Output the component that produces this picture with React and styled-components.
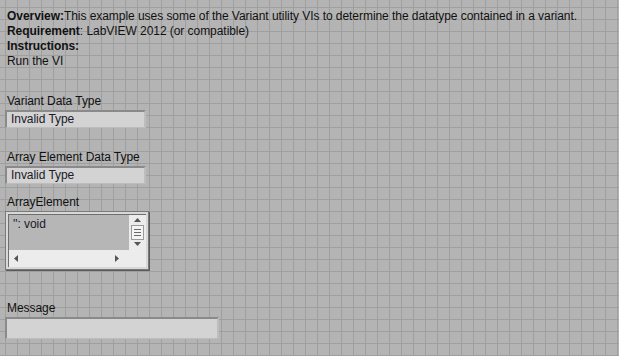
import React from 'react';
import styled, { createGlobalStyle } from 'styled-components';

const GlobalStyle = createGlobalStyle`
  html, body { margin: 0; padding: 0; }
  body {
    width: 619px;
    height: 356px;
    overflow: hidden;
    font-family: "Liberation Sans", Arial, sans-serif;
  }
`;

// 1. 패널 배경 (그리드)
const Panel = styled.div`
  width: 619px;
  height: 356px;
  box-sizing: border-box;
  background-color: #b4b4b4;
  background-image:
    linear-gradient(to right, #9f9f9f 1px, transparent 1px),
    linear-gradient(to bottom, #9f9f9f 1px, transparent 1px);
  background-size: 12px 12px;
  background-position: 5px 7px;
  padding: 9px 7px 0 7px;
  color: #111;
  font-size: 12px;
  letter-spacing: -0.05px;
`;

const Notes = styled.div`
  line-height: 15px;
  margin-bottom: 25px;
  b { font-weight: bold; }
`;

const Field = styled.div`
  display: flex;
  flex-direction: column;
  margin-left: -2px;
  margin-bottom: ${p => p.$gap || 0}px;
`;

const Label = styled.div`
  line-height: 14px;
  margin-left: 2px;
  margin-bottom: 2px;
`;

// 2. 문자열 표시기
const Indicator = styled.div`
  width: ${p => p.$w}px;
  height: ${p => p.$h || 18}px;
  box-sizing: border-box;
  background: #d3d3d3;
  border-top: 2px solid #8a8a8a;
  border-left: 2px solid #8a8a8a;
  border-right: 2px solid #bdbdbd;
  border-bottom: 1px solid #bdbdbd;
  padding: 0 0 0 4px;
  line-height: 15px;
  color: #1a1a2a;
`;

// 3. 배열 컨트롤
const ArrayFrame = styled.div`
  width: 144px;
  height: 59px;
  box-sizing: border-box;
  border: 1px solid #7a7a7a;
  background: #d8d8d8;
  padding: 2px;
  box-shadow: 1px 1px 0 #5a5a5a;
`;

const ArrayInner = styled.div`
  display: grid;
  grid-template-columns: 1fr 17px;
  grid-template-rows: 1fr 17px;
  width: 100%;
  height: 100%;
  border-top: 1px solid #6f6f6f;
  border-left: 1px solid #6f6f6f;
  box-sizing: border-box;
`;

const ElementArea = styled.div`
  background: #b6b6b6;
  padding: 2px 0 0 4px;
  line-height: 14px;
  color: #1a1a2a;
`;

const ScrollV = styled.div`
  background: #ececec;
  display: flex;
  flex-direction: column;
  align-items: center;
  justify-content: space-between;
  padding: 3px 0 4px;
  box-sizing: border-box;
`;

const ScrollH = styled.div`
  background: #ececec;
  display: flex;
  align-items: center;
  justify-content: space-between;
  padding: 0 10px 0 5px;
`;

const Corner = styled.div`
  background: #ececec;
`;

const Thumb = styled.div`
  width: 13px;
  height: 15px;
  box-sizing: border-box;
  border: 1px solid #9a9a9a;
  background: #f4f4f4;
  display: flex;
  flex-direction: column;
  justify-content: center;
  gap: 2px;
  padding: 0 2px;
  margin: 1px 0;
  span { display: block; height: 1px; background: #6a6a6a; }
`;

const Arrow = ({ dir }) => {
  const pts = {
    up: '0,4 3.5,0 7,4',
    down: '0,0 3.5,4 7,0',
    left: '4,0 0,3.5 4,7',
    right: '0,0 4,3.5 0,7',
  }[dir];
  const vertical = dir === 'up' || dir === 'down';
  return (
    <svg width={vertical ? 7 : 4} height={vertical ? 4 : 7}>
      <polygon points={pts} fill="#555" />
    </svg>
  );
};

export default function App() {
  return (
    <>
      <GlobalStyle />
      <Panel>
        <Notes>
          <div><b>Overview:</b>This example uses some of the Variant utility VIs to determine the datatype contained in a variant.</div>
          <div><b>Requirement</b>: LabVIEW 2012 (or compatible)</div>
          <div><b>Instructions:</b></div>
          <div>Run the VI</div>
        </Notes>

        <Field $gap={22}>
          <Label>Variant Data Type</Label>
          <Indicator $w={141}>Invalid Type</Indicator>
        </Field>

        <Field $gap={11}>
          <Label>Array Element Data Type</Label>
          <Indicator $w={141}>Invalid Type</Indicator>
        </Field>

        <Field $gap={31}>
          <Label>ArrayElement</Label>
          <ArrayFrame>
            <ArrayInner>
              <ElementArea>'': void</ElementArea>
              <ScrollV>
                <Arrow dir="up" />
                <Thumb><span /><span /><span /></Thumb>
                <Arrow dir="down" />
              </ScrollV>
              <ScrollH>
                <Arrow dir="left" />
                <Arrow dir="right" />
              </ScrollH>
              <Corner />
            </ArrayInner>
          </ArrayFrame>
        </Field>

        <Field>
          <Label>Message</Label>
          <Indicator $w={214} $h={22} />
        </Field>
      </Panel>
    </>
  );
}
